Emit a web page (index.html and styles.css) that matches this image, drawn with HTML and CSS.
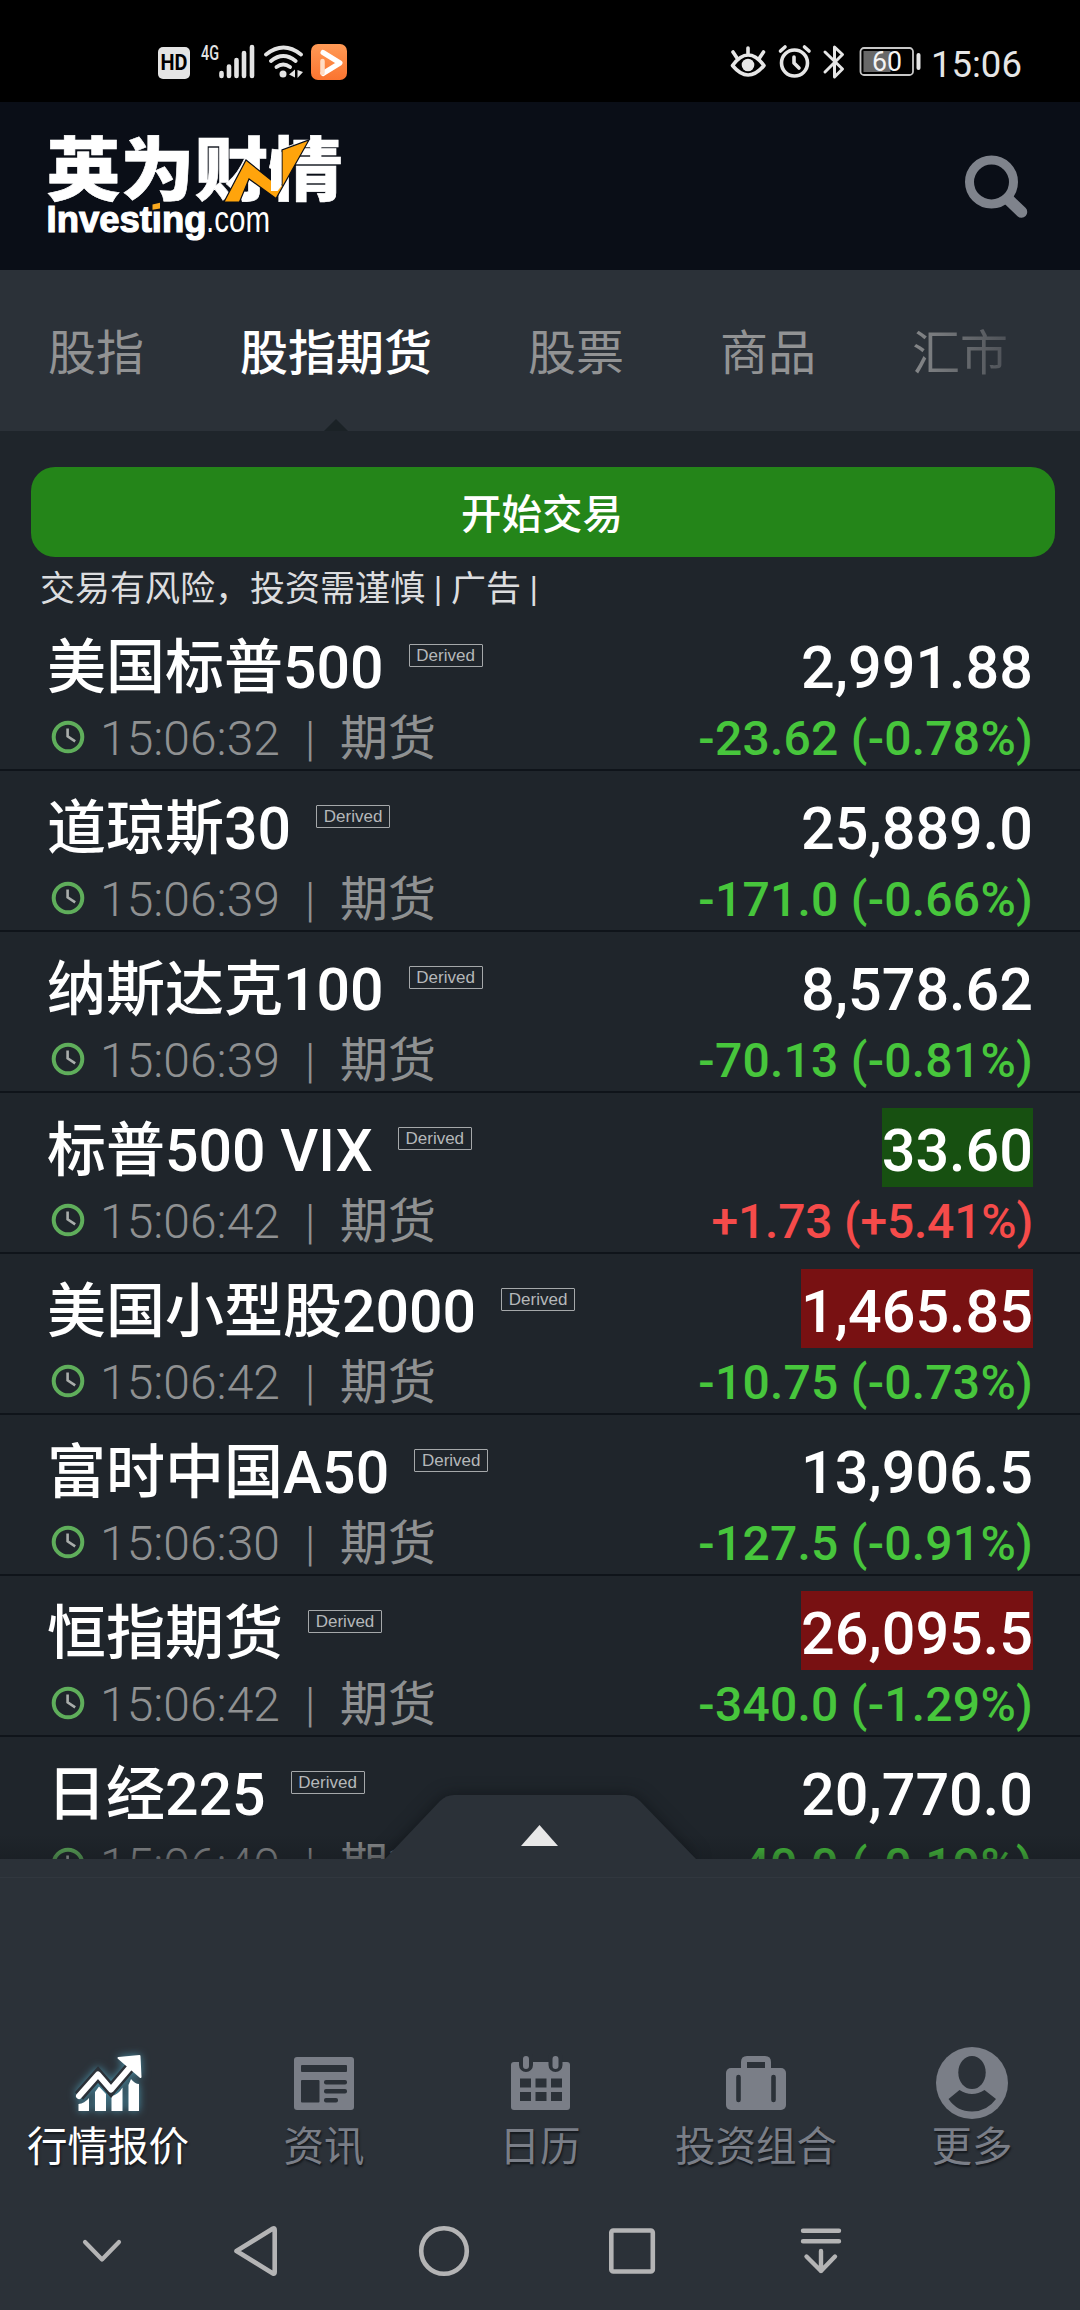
FILE: index.html
```html
<!DOCTYPE html>
<html lang="zh-CN">
<head>
<meta charset="utf-8">
<title>英为财情</title>
<link rel="stylesheet" href="styles.css">
</head>
<body>
<svg class="defs" width="0" height="0">
  <symbol id="clock" viewBox="0 0 34 34"><circle cx="17" cy="17" r="14.3" fill="none" stroke="#5fae5b" stroke-width="4"/><path d="M16.6 8.5v7.8l7.6 5" fill="none" stroke="#a9adab" stroke-width="2.6"/></symbol>
</svg>
<div class="status">
  <svg class="status-left" width="200" height="44" viewBox="155 40 200 44">
    <rect x="158" y="47" width="32" height="32" rx="5" fill="#e4e4e4"/>
    <text x="160.5" y="70" class="hd" textLength="27" lengthAdjust="spacingAndGlyphs">HD</text>
    <text x="201" y="60" class="fourg" textLength="18" lengthAdjust="spacingAndGlyphs">4G</text>
    <path d="M221.5 73v3M229 66.500v9.500M236.500 60v16M244 53v23M252 47v29" stroke="#e4e4e4" stroke-width="4.600" stroke-linecap="round"/>
    <g fill="none" stroke="#e4e4e4" stroke-width="3.800" stroke-linecap="round"><path d="M266 54.500q17.500-14 35 0M271 61q12.300-10 24.600 0M276.500 67q6.700-5 13.500 0"/></g>
    <circle cx="283" cy="74" r="3.500" fill="#e4e4e4"/>
    <path d="M289 74.500l6-5v8M297.500 70v8l5.500-6" fill="#e4e4e4"/>
    <defs><linearGradient id="og" x1="0" y1="0" x2="0" y2="1"><stop offset="0" stop-color="#ff9a56"/><stop offset="1" stop-color="#fb7430"/></linearGradient></defs>
    <rect x="311" y="44" width="36" height="36" rx="7" fill="url(#og)"/>
    <path d="M323 52.500l17 10.500-17 10.500" fill="none" stroke="#fff" stroke-width="5" stroke-linecap="round" stroke-linejoin="round"/><path d="M322.500 61v12" stroke="#ffdcc4" stroke-width="4.500" stroke-linecap="round"/>
  </svg>
  <svg class="status-right" width="200" height="44" viewBox="725 40 200 44">
    <g fill="none" stroke="#e6e6e6" stroke-linecap="round" stroke-linejoin="round">
      <path d="M732.500 65.500q15.500-21 31.500 0q-16 19-31.500 0zM748 48v7M733 52l4 6M763.500 52l-4 6" stroke-width="3.600"/>
      <circle cx="794.500" cy="63" r="13" stroke-width="3.600"/><path d="M794 57v6l5 5" stroke-width="3.600"/><path d="M780.500 51l4.500-4M809 51l-4.500-4" stroke-width="3.600"/>
      <path d="M825 52l17.500 17-8 8V47l8 7.500L825 72" stroke-width="3"/>
    </g>
    <circle cx="748" cy="65" r="6.300" fill="#e6e6e6"/>
    <rect x="860.500" y="48" width="52.500" height="27" rx="3.500" fill="none" stroke="#c8c8c8" stroke-width="1.800"/>
    <rect x="863.500" y="51" width="27" height="21" fill="#686868"/>
    <rect x="916.500" y="53" width="4" height="17" rx="2" fill="#e6e6e6"/>
    <text x="872" y="70.500" class="battery" textLength="30" lengthAdjust="spacingAndGlyphs">60</text>
  </svg>
  <span class="status-time">15:06</span>
</div>
<header class="header">
  <svg width="310" height="136" viewBox="40 118 310 136">
    <text x="46.500" y="194.500" class="logo-cn" textLength="296" lengthAdjust="spacingAndGlyphs">英为财情</text>
    <path d="M224 202L246 160L271 180L282 185V150L309 140L276 198.500L249 179L239.500 202z" fill="#ffa40c" stroke="#0a0e17" stroke-width="1.200"/>
    <path d="M271 156l10.500-4v34l-4 5H271z" fill="#fff"/>
    <text x="46.500" y="232" class="logo-en" textLength="160" lengthAdjust="spacingAndGlyphs">Investing</text>
    <text x="206" y="232" class="logo-com" textLength="64" lengthAdjust="spacingAndGlyphs">.com</text>
    <path d="M151.500 203h10v8h-10z" fill="#0a0e17"/><path d="M152.500 204.500l7.500-1.800v5.800l-7.500 1.300z" fill="#f9a91f"/>
  </svg>
  <svg class="search" width="70" height="70" viewBox="960 155 70 70"><circle cx="991.500" cy="182" r="22" fill="none" stroke="#7f838c" stroke-width="9"/><path d="M1008 199l13.500 13" stroke="#7f838c" stroke-width="11.500" stroke-linecap="round"/></svg>
</header>
<nav class="tabs">
  <span>股指</span><span class="active">股指期货</span><span>股票</span><span>商品</span><span class="fading">汇市</span>
</nav>
<main class="content">
  <button class="trade">开始交易</button>
  <p class="notice">交易有风险，投资需谨慎 | 广告 |</p>
  <section class="list">
    <article class="row"><div class="line"><h2>美国标普500</h2><i>Derived</i><b>2,991.88</b></div><div class="sub"><svg><use href="#clock"/></svg><time>15:06:32</time><em>|</em><span>期货</span><strong>-23.62 (-0.78%)</strong></div></article>
    <article class="row"><div class="line"><h2>道琼斯30</h2><i>Derived</i><b>25,889.0</b></div><div class="sub"><svg><use href="#clock"/></svg><time>15:06:39</time><em>|</em><span>期货</span><strong>-171.0 (-0.66%)</strong></div></article>
    <article class="row"><div class="line"><h2>纳斯达克100</h2><i>Derived</i><b>8,578.62</b></div><div class="sub"><svg><use href="#clock"/></svg><time>15:06:39</time><em>|</em><span>期货</span><strong>-70.13 (-0.81%)</strong></div></article>
    <article class="row"><div class="line"><h2>标普500 VIX</h2><i>Derived</i><b class="flash-green">33.60</b></div><div class="sub"><svg><use href="#clock"/></svg><time>15:06:42</time><em>|</em><span>期货</span><strong class="up">+1.73 (+5.41%)</strong></div></article>
    <article class="row"><div class="line"><h2>美国小型股2000</h2><i>Derived</i><b class="flash-red">1,465.85</b></div><div class="sub"><svg><use href="#clock"/></svg><time>15:06:42</time><em>|</em><span>期货</span><strong>-10.75 (-0.73%)</strong></div></article>
    <article class="row"><div class="line"><h2>富时中国A50</h2><i>Derived</i><b>13,906.5</b></div><div class="sub"><svg><use href="#clock"/></svg><time>15:06:30</time><em>|</em><span>期货</span><strong>-127.5 (-0.91%)</strong></div></article>
    <article class="row"><div class="line"><h2>恒指期货</h2><i>Derived</i><b class="flash-red">26,095.5</b></div><div class="sub"><svg><use href="#clock"/></svg><time>15:06:42</time><em>|</em><span>期货</span><strong>-340.0 (-1.29%)</strong></div></article>
    <article class="row"><div class="line"><h2>日经225</h2><i>Derived</i><b>20,770.0</b></div><div class="sub"><svg><use href="#clock"/></svg><time>15:06:40</time><em>|</em><span>期货</span><strong>-40.0 (-0.19%)</strong></div></article>
  </section>
  <svg class="handle" width="360" height="80" viewBox="360 1780 360 80"><path d="M384 1860L440 1801Q446 1795 454 1795H626Q634 1795 640 1801L697 1860z" fill="#2b3138"/><path d="M539.500 1825L558 1846H521z" fill="#e8e8e8"/></svg>
</main>
<div class="ad-slot"></div>
<footer class="bottom">
  <a class="on"><svg width="72" height="76" viewBox="0 0 72 76"><g fill="#fff"><path d="M6.500 64v-7q6-.500 10.500-6V64zM23 64V45l4-5.500L34 47v17zM39.500 64V49q7-1.500 11-8.500V64zM56.500 64V38l2.500-6q4 5 8 5v27z"/></g><path d="M7 49L26 27.500l13 15L60 18" fill="none" stroke="#2b3138" stroke-width="11"/><path d="M7 49L26 27.500l13 15L60 18" fill="none" stroke="#fff" stroke-width="6" stroke-linecap="round" stroke-linejoin="round"/><path d="M46.500 11L67.500 9l1 21z" fill="#fff" stroke="#fff" stroke-width="2" stroke-linejoin="round"/></svg><span>行情报价</span></a>
  <a><svg width="72" height="76" viewBox="0 0 72 76"><rect x="6" y="10" width="60" height="53" rx="3" fill="#7a7e87"/><g fill="#2b3138"><rect x="13" y="18" width="46" height="7" rx="1"/><rect x="13" y="33" width="18.500" height="22.500" rx="1"/><rect x="36" y="33" width="23" height="4.500" rx="2"/><rect x="36" y="42" width="23" height="4.500" rx="2"/><rect x="36" y="51" width="14" height="4.500" rx="2"/></g></svg><span>资讯</span></a>
  <a><svg width="72" height="76" viewBox="0 0 72 76"><rect x="7" y="15" width="59" height="48" rx="3" fill="#7a7e87"/><path d="M22 10v8M51.500 10v8" stroke="#2b3138" stroke-width="14" stroke-linecap="round"/><path d="M22 12v7M51.500 12v7" stroke="#7a7e87" stroke-width="6" stroke-linecap="round"/><g fill="#2b3138"><path d="M16 31.500h11v9H16zM31.500 31.500h11v9h-11zM47 31.500h11v9H47zM16 45h11v9H16zM31.500 45h11v9h-11zM47 45h11v9H47z"/></g></svg><span>日历</span></a>
  <a><svg width="72" height="76" viewBox="0 0 72 76"><rect x="6" y="21" width="60" height="42" rx="5" fill="#7a7e87"/><path d="M24 22v-7q0-3 3-3h18q3 0 3 3v7" fill="none" stroke="#7a7e87" stroke-width="6"/><path d="M18.500 30v23M53.500 30v23" stroke="#2b3138" stroke-width="4.600" stroke-linecap="round"/></svg><span>投资组合</span></a>
  <a><svg width="72" height="76" viewBox="0 0 72 76"><circle cx="36" cy="36" r="36" fill="#7a7e87"/><ellipse cx="36" cy="25.500" rx="13.700" ry="16.500" fill="#2b3138"/><path d="M23.500 43q12.500 8 25 0L60 52q-9 12.500-24 12.500T12.500 52z" fill="#2b3138"/></svg><span>更多</span></a>
</footer>
<div class="sysnav">
  <svg width="1080" height="120" viewBox="0 2190 1080 120" fill="none" stroke="#b4b4b5" stroke-width="4.600" stroke-linecap="round" stroke-linejoin="round"><path d="M85 2242L102 2259.500L119 2242" stroke-width="4.200"/><path d="M236.500 2251L273 2228.500Q274.700 2227.500 274.700 2230V2272Q274.700 2274.500 273 2273.500z"/><circle cx="444" cy="2251" r="22.800"/><rect x="611.300" y="2230.500" width="41.500" height="41" rx="2"/><path d="M803 2230.800h36M803 2241.300h36M821 2251v20M806.500 2256.500L821 2271L835 2256.500" stroke-width="4.400"/></svg>
</div>
</body>
</html>
```
FILE: styles.css
```css
* { box-sizing: border-box; }
body {
  margin: 0;
  width: 1080px;
  height: 2310px;
  overflow: hidden;
  display: flex;
  flex-direction: column;
  background: #2b3138;
  color: #fff;
  font-family: Roboto, "Noto Sans CJK SC", sans-serif;
}
svg { display: block; flex: none; }
.defs { position: absolute; }

.status {
  height: 102px;
  flex: none;
  background: #000;
  display: flex;
  align-items: flex-start;
  padding: 40px 0 0 155px;
}
.status-right { margin-left: 370px; }
.status-time { margin-left: 6px; font-size: 36.500px; line-height: 49px; color: #e6e6e6; }
.hd { font: 700 22px Roboto, sans-serif; fill: #000; }
.fourg { font: 500 21px Roboto, sans-serif; fill: #e4e4e4; }
.battery { font: 400 27px Roboto, sans-serif; fill: #f4f4f4; }

.header {
  height: 168px;
  flex: none;
  background: #0a0e17;
  display: flex;
  justify-content: space-between;
  align-items: center;
  padding: 0 50px 0 40px;
}
.search { margin-top: 8px; }
.logo-cn { font: 900 69px "Noto Sans CJK SC", sans-serif; fill: #fff; stroke: #fff; stroke-width: .6px; }
.logo-en { font: 700 37px "Liberation Sans", sans-serif; fill: #fff; stroke: #fff; stroke-width: 1.200px; }
.logo-com { font: 300 36px "Liberation Sans", sans-serif; fill: #fff; }

.tabs {
  height: 161px;
  flex: none;
  display: flex;
  gap: 96px;
  padding-left: 48px;
  font-size: 48px;
  line-height: 167px;
  color: #929394;
}
.tabs .active { position: relative; color: #fff; font-weight: 500; }
.tabs .active::after {
  content: "";
  position: absolute;
  left: 84px;
  top: 149px;
  border: 12px solid transparent;
  border-top: 0;
  border-bottom-color: #1b2226;
}
.tabs .fading {
  background: linear-gradient(90deg, #858789, #4d5157);
  -webkit-background-clip: text;
  background-clip: text;
  color: transparent;
}

.content {
  position: relative;
  height: 1428px;
  flex: none;
  background: #1f252b;
  overflow: hidden;
  padding-top: 36px;
}
.trade {
  display: block;
  width: 1024px;
  height: 90px;
  margin: 0 0 0 31px;
  padding: 5px 2px 0 0;
  border: 0;
  border-radius: 24px;
  background: #248519;
  color: #fff;
  font: 500 40.500px/86px Roboto, "Noto Sans CJK SC", sans-serif;
}
.notice { margin: 0; padding-left: 40px; height: 53px; font-size: 35px; line-height: 65px; color: #dcdddf; }

.row { height: 161px; padding: 15px 47px 0 47px; border-bottom: 2px solid #0f141a; }
.line { display: flex; height: 79px; }
.line h2, .line b { margin: 0; padding-top: 6px; font-size: 59.300px; line-height: 73px; font-weight: 500; white-space: nowrap; }
.line h2 { font-size: 59px; }
.line i {
  width: 74px;
  height: 23px;
  margin: 19px 0 0 25px;
  border: 1px solid #a5a8aa;
  border-radius: 1px;
  font: 400 17px/21px "Liberation Sans", sans-serif;
  text-align: center;
  color: #b5b8ba;
}
.line b { margin-left: auto; }
.flash-green { background: #175011; }
.flash-red { background: #781112; }
.sub { display: flex; align-items: center; margin-top: 4px; font-size: 48px; line-height: 61px; color: #8f9192; }
.sub svg { width: 34px; height: 34px; margin: -4px 0 0 4px; }
.sub time { width: 181px; margin-left: 15px; font-weight: 300; }
.sub em { width: 24px; margin-left: 17px; text-align: center; font-style: normal; font-weight: 300; }
.sub span { margin-left: 18px; }
.sub strong { margin-left: auto; font-weight: 500; letter-spacing: .250px; color: #47c63c; }
.sub .up { letter-spacing: -.200px; color: #f54b4a; }
.content::after {
  content: "";
  position: absolute;
  left: 0;
  right: 0;
  bottom: 0;
  height: 24px;
  background: linear-gradient(transparent, rgba(20, 24, 29, .4));
}
.handle { position: absolute; z-index: 1; left: 360px; bottom: -1px; filter: drop-shadow(0 0 8px rgba(10, 13, 17, .6)); }

.ad-slot { height: 173px; flex: none; border-top: 18px solid #2b3138; box-shadow: inset 0 1px #31373e; }
.bottom { flex: none; height: 158px; padding-top: 15px; display: grid; grid-template-columns: repeat(5, 216px); }
.bottom a { display: flex; flex-direction: column; align-items: center; color: #7a7e87; }
.bottom span { font-size: 40.500px; line-height: 48px; text-shadow: 1px 2px 2px #14181d; white-space: nowrap; }
.bottom .on { color: #fff; }
.bottom .on svg { filter: drop-shadow(0 0 4px #4a8ea4); }
.sysnav { height: 120px; flex: none; }
```
